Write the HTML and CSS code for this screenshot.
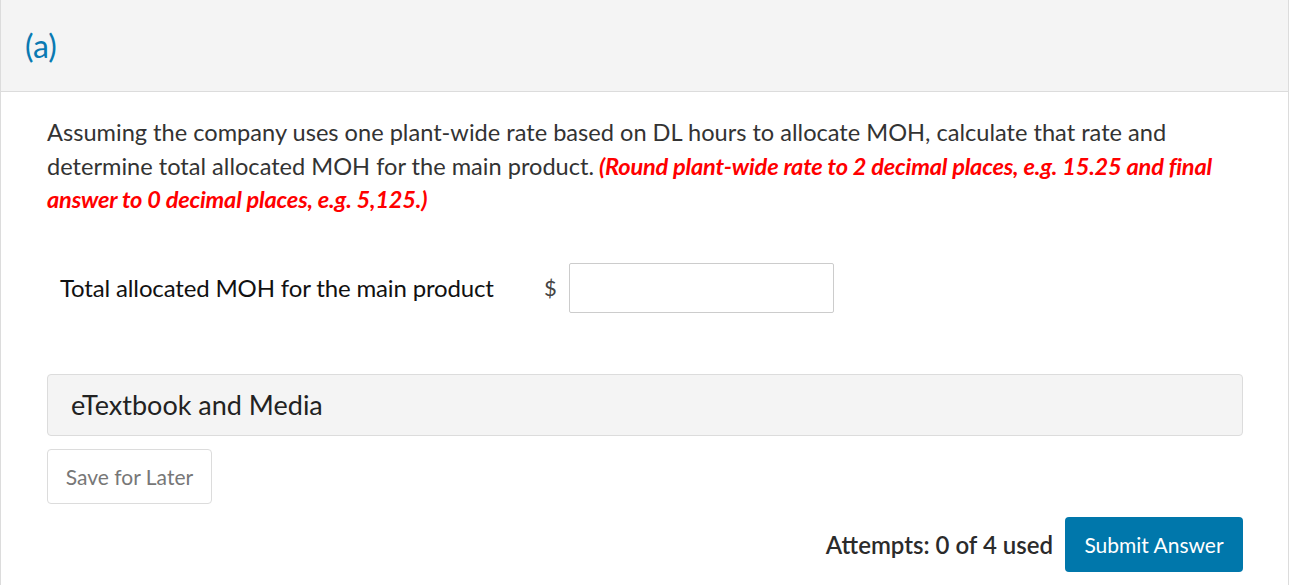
FILE: index.html
```html
<!DOCTYPE html>
<html lang="en">
<head>
    <meta charset="UTF-8">
    <title>Question (a)</title>
    <link rel="stylesheet" href="styles.css">
</head>
<body>
    <div class="question">
        <div class="question-header">
            <h2 class="part-label">(a)</h2>
        </div>
        <div class="question-body">
            <p class="prompt">Assuming the company uses one plant-wide rate based on DL hours to allocate MOH, calculate that rate and determine total allocated MOH for the main product.<em class="hint"> (Round plant-wide rate to 2 decimal places, e.g. 15.25 and final answer to 0 decimal places, e.g. 5,125.)</em></p>

            <div class="answer-row">
                <label class="answer-label" for="moh">Total allocated MOH for the main product</label>
                <span class="currency">$</span>
                <input type="text" id="moh" class="answer-input">
            </div>

            <div class="media-panel">eTextbook and Media</div>

            <button class="save-btn">Save for Later</button>

            <div class="submit-row">
                <span class="attempts">Attempts: 0 of 4 used</span>
                <button class="submit-btn">Submit Answer</button>
            </div>
        </div>
    </div>
</body>
</html>
```

FILE: styles.css
```css
/* Variables */
:root {
    --panel: #f4f4f4;
    --line: #dcdcdc;
    --text: #333;
    --blue: #0a7ab2;
    --button: #0077ab;
    --hint: #ff0000;
}

* {
    margin: 0;
    padding: 0;
    box-sizing: border-box;
}

body {
    font-family: 'Lato', 'Liberation Sans', sans-serif;
    color: var(--text);
    background: #fff;
}

/* Outer question box */
.question {
    width: 1289px;
    min-height: 585px;
    border-left: 1px solid var(--line);
    border-right: 1px solid var(--line);
}

.question-header {
    height: 92px;
    background: var(--panel);
    border-bottom: 1px solid var(--line);
    padding: 26px 0 0 24px;
}

.part-label {
    font-size: 32px;
    font-weight: normal;
    color: var(--blue);
    line-height: 40px;
}

/* Body */
.question-body {
    padding: 24px 45px 0 46px;
}

.prompt {
    font-size: 23.6px;
    line-height: 33.5px;
    color: var(--text);
}

.hint {
    color: var(--hint);
    font-weight: bold;
    letter-spacing: -0.2px;
}

/* Answer input row */
.answer-row {
    display: flex;
    align-items: center;
    margin-top: 46px;
    padding-left: 13px;
}

.answer-label {
    font-size: 24px;
    color: #111;
    letter-spacing: -0.15px;
    width: 484px;
}

.currency {
    font-size: 22px;
    color: #444;
    width: 25px;
}

.answer-input {
    width: 265px;
    height: 50px;
    border: 1px solid #ccc;
    border-radius: 2px;
    font-size: 20px;
    padding: 0 10px;
}

/* eTextbook panel */
.media-panel {
    margin-top: 61px;
    height: 62px;
    background: var(--panel);
    border: 1px solid var(--line);
    border-radius: 4px;
    font-size: 27px;
    line-height: 60px;
    padding-left: 23px;
    color: #222;
}

.save-btn {
    margin-top: 13px;
    width: 165px;
    height: 55px;
    background: #fff;
    border: 1px solid var(--line);
    border-radius: 4px;
    font-family: inherit;
    font-size: 21px;
    color: #777;
    cursor: pointer;
}

/* Submit row */
.submit-row {
    display: flex;
    justify-content: flex-end;
    align-items: center;
    gap: 12px;
    margin-top: 13px;
}

.attempts {
    font-size: 24px;
    font-weight: 600;
    color: #2b2b2b;
}

.submit-btn {
    width: 178px;
    height: 55px;
    background: var(--button);
    color: #fff;
    border: none;
    border-radius: 4px;
    font-family: inherit;
    font-size: 21px;
    cursor: pointer;
}
```
